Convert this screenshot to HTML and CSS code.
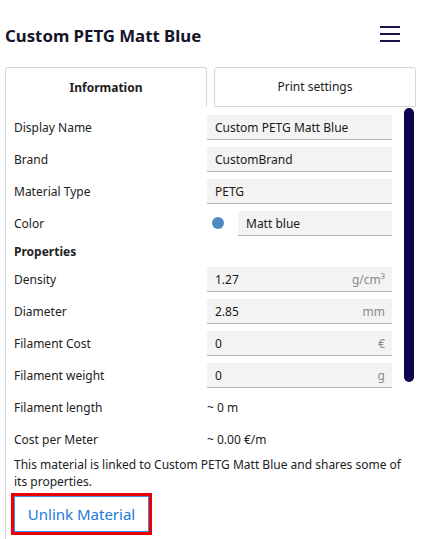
FILE: index.html
```html
<!DOCTYPE html>
<html>
<head>
<meta charset="utf-8">
<link rel="stylesheet" href="styles.css">
</head>
<body>
<header class="header">
  <h1 class="title">Custom PETG Matt Blue</h1>
  <button class="menu" aria-label="Menu">
    <svg width="22" height="18" viewBox="0 0 22 18"><rect x="1" y="1" width="20" height="2" fill="#16164a"/><rect x="1" y="8" width="20" height="2" fill="#16164a"/><rect x="1" y="15" width="20" height="2" fill="#16164a"/></svg>
  </button>
</header>
<nav class="tabs">
  <div class="tab active">Information</div>
  <div class="tab">Print settings</div>
</nav>
<section class="panel">
  <div class="scrollbar"></div>
  <div class="row"><span class="label">Display Name</span><div class="field">Custom PETG Matt Blue</div></div>
  <div class="row"><span class="label">Brand</span><div class="field">CustomBrand</div></div>
  <div class="row"><span class="label">Material Type</span><div class="field">PETG</div></div>
  <div class="row"><span class="label">Color</span><div class="color-cell"><span class="swatch"></span><div class="field narrow">Matt blue</div></div></div>
  <div class="row heading"><span class="label bold">Properties</span></div>
  <div class="row"><span class="label">Density</span><div class="field"><span>1.27</span><span class="unit">g/cm³</span></div></div>
  <div class="row"><span class="label">Diameter</span><div class="field"><span>2.85</span><span class="unit">mm</span></div></div>
  <div class="row"><span class="label">Filament Cost</span><div class="field"><span>0</span><span class="unit">€</span></div></div>
  <div class="row"><span class="label">Filament weight</span><div class="field"><span>0</span><span class="unit">g</span></div></div>
  <div class="row"><span class="label">Filament length</span><span class="value">~ 0 m</span></div>
  <div class="row"><span class="label">Cost per Meter</span><span class="value">~ 0.00 €/m</span></div>
  <p class="note">This material is linked to Custom PETG Matt Blue and shares some of its properties.</p>
  <button class="unlink">Unlink Material</button>
</section>
</body>
</html>
```
FILE: styles.css
```css
html, body {
  margin: 0;
  padding: 0;
  background: #ffffff;
}
body {
  font-family: "Noto Sans", "Open Sans", sans-serif;
  color: #1f1f1f;
  width: 427px;
  height: 539px;
  overflow: hidden;
}
.header {
  display: flex;
  align-items: center;
  justify-content: space-between;
  height: 67px;
  padding: 0 26px 0 5px;
  box-sizing: border-box;
}
.title {
  margin: 0;
  font-size: 16.8px;
  font-weight: 700;
  color: #14142a;
  padding-top: 3px;
}
.menu {
  background: none;
  border: 0;
  padding: 0;
  width: 22px;
  height: 18px;
  margin-top: 1px;
}
.menu svg { display: block; }
.tabs {
  display: flex;
  gap: 7px;
  padding-left: 5px;
  height: 40px;
}
.tab {
  box-sizing: border-box;
  width: 202px;
  height: 40px;
  border: 1px solid #d6d6d6;
  border-radius: 3px 3px 0 0;
  display: flex;
  align-items: center;
  justify-content: center;
  font-size: 12px;
  color: #222;
  padding-bottom: 1px;
}
.tab.active {
  font-weight: 700;
  border-bottom: 0;
  background: #fff;
}
.panel {
  position: relative;
  margin-left: 5px;
  border-left: 1px solid #d6d6d6;
  padding: 4px 0 0 8px;
  height: 440px;
  box-sizing: border-box;
}
.scrollbar {
  position: absolute;
  left: 398px;
  top: 1px;
  width: 10px;
  height: 274px;
  border-radius: 5px;
  background: #0c0650;
}
.row {
  display: flex;
  align-items: center;
  height: 32px;
}
.row.heading { height: 24px; }
.label {
  width: 193px;
  font-size: 12px;
  color: #222;
}
.label.bold { font-weight: 700; }
.field {
  box-sizing: border-box;
  width: 185px;
  height: 25px;
  background: #f3f3f3;
  border-bottom: 1px solid #b4b4b4;
  display: flex;
  align-items: center;
  justify-content: space-between;
  padding: 1px 7px 0 8px;
  font-size: 12px;
  color: #1a1a1a;
}
.unit { color: #8a8a8a; }
.color-cell {
  display: flex;
  align-items: center;
  width: 185px;
}
.swatch {
  width: 12px;
  height: 12px;
  border-radius: 50%;
  background: #4f89c5;
  margin-left: 5px;
  margin-right: 14px;
}
.field.narrow { width: 154px; }
.value {
  font-size: 12px;
  color: #222;
}
.note {
  margin: 1px 0 0 0;
  font-size: 12px;
  line-height: 17px;
  color: #222;
  width: 395px;
}
.unlink {
  margin-top: 6px;
  width: 135px;
  height: 36px;
  box-sizing: border-box;
  background: #fff;
  border: 1px solid #3d8de6;
  outline: 3px solid #ee0000;
  font-family: "Noto Sans", "Open Sans", sans-serif;
  font-size: 15px;
  color: #2279dd;
  padding: 0;
}
```
